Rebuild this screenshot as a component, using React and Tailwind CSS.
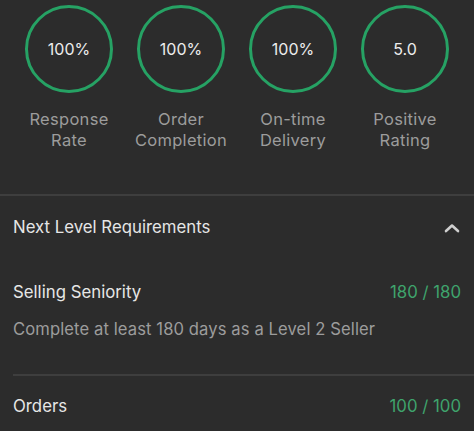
export default function App() {
  const stats = [
    { v: "100%", l: ["Response", "Rate"] },
    { v: "100%", l: ["Order", "Completion"] },
    { v: "100%", l: ["On-time", "Delivery"] },
    { v: "5.0", l: ["Positive", "Rating"] },
  ];
  return (
    <div className="w-[474px] h-[431px] overflow-hidden bg-[#2c2c2c]" style={{ fontFamily: "Inter, 'Noto Sans', sans-serif" }}>
      <div className="grid grid-cols-4 px-[13px] pt-[5px]">
        {stats.map((s, i) => (
          <div key={i} className="flex flex-col items-center">
            <div className="w-[88px] h-[88px] rounded-full border-[3px] border-[#26a264] flex items-center justify-center text-[16px] text-[#ececec]">
              {s.v}
            </div>
            <div className="mt-[16px] text-center text-[16.5px] leading-[21px] tracking-[0.3px] text-[#9c9c9c]">
              <div>{s.l[0]}</div>
              <div>{s.l[1]}</div>
            </div>
          </div>
        ))}
      </div>
      <div className="mt-[43px] h-[2px] bg-[#3e3e3e]" />
      <div className="flex items-center justify-between pl-[13px] pr-[14px] h-[64px]">
        <span className="text-[16.8px] text-[#e6e6e6]">Next Level Requirements</span>
        <svg width="16" height="10" viewBox="0 0 16 10" fill="none">
          <path d="M2 8 L8 2.5 L14 8" stroke="#cfcfcf" strokeWidth="2.6" strokeLinecap="round" strokeLinejoin="round" />
        </svg>
      </div>
      <div className="flex items-center justify-between px-[13px] mt-[21px] h-[24px]">
        <span className="text-[16.8px] text-[#e6e6e6]">Selling Seniority</span>
        <span className="text-[16.8px] text-[#3fa46d]">180 / 180</span>
      </div>
      <div className="px-[13px] mt-[12px] text-[16.6px] leading-[24px] tracking-[0.1px] text-[#9c9c9c]">
        Complete at least 180 days as a Level 2 Seller
      </div>
      <div className="ml-[13px] mt-[33px] h-[2px] bg-[#3e3e3e]" />
      <div className="flex items-center justify-between px-[13px] mt-[19px] h-[24px]">
        <span className="text-[16.8px] text-[#e6e6e6]">Orders</span>
        <span className="text-[16.8px] text-[#3fa46d]">100 / 100</span>
      </div>
    </div>
  );
}
